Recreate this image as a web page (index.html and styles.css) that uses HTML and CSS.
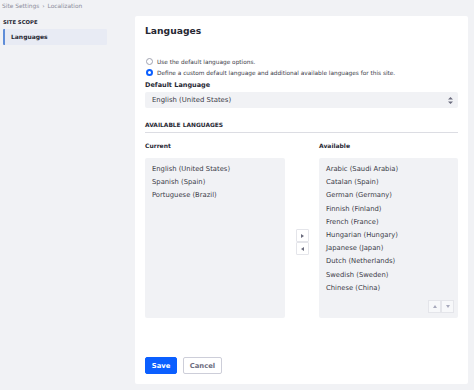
FILE: index.html
```html
<!doctype html>
<html lang="en">
<head>
    <meta charset="utf-8">
    <meta name="viewport" content="width=device-width, initial-scale=1">
    <title>Localization</title>
    <link rel="stylesheet" href="styles.css">
</head>
<body>

    <div class="breadcrumb">Site Settings <span class="sep">&rsaquo;</span> Localization</div>

    <div class="layout">
        <nav class="sidebar">
            <div class="side-title">SITE SCOPE</div>
            <a class="side-item active">Languages</a>
        </nav>

        <div class="card">
            <h1>Languages</h1>

            <form class="lang-form">
                <label class="radio">
                    <span class="radio-dot"></span>
                    Use the default language options.
                </label>
                <label class="radio">
                    <span class="radio-dot checked"></span>
                    Define a custom default language and additional available languages for this site.
                </label>

                <div class="form-label">Default Language</div>
                <div class="select">
                    <span>English (United States)</span>
                    <svg class="caret" width="5" height="7" viewBox="0 0 5 7">
                        <path d="M2.5 0 L5 2.6 H0 Z M2.5 7 L0 4.4 H5 Z" fill="#6b6c7e"/>
                    </svg>
                </div>

                <div class="section-title">AVAILABLE LANGUAGES</div>

                <div class="selector">
                    <div class="col">
                        <div class="col-label">Current</div>
                        <ul class="list-box">
                            <li>English (United States)</li>
                            <li>Spanish (Spain)</li>
                            <li>Portuguese (Brazil)</li>
                        </ul>
                    </div>

                    <div class="move">
                        <button type="button" class="move-btn">
                            <svg width="3" height="4" viewBox="0 0 3 4"><path d="M0 0 L3 2 L0 4 Z" fill="#6b6c7e"/></svg>
                        </button>
                        <button type="button" class="move-btn">
                            <svg width="3" height="4" viewBox="0 0 3 4"><path d="M3 0 L0 2 L3 4 Z" fill="#6b6c7e"/></svg>
                        </button>
                    </div>

                    <div class="col">
                        <div class="col-label">Available</div>
                        <div class="list-box avail">
                            <ul>
                                <li>Arabic (Saudi Arabia)</li>
                                <li>Catalan (Spain)</li>
                                <li>German (Germany)</li>
                                <li>Finnish (Finland)</li>
                                <li>French (France)</li>
                                <li>Hungarian (Hungary)</li>
                                <li>Japanese (Japan)</li>
                                <li>Dutch (Netherlands)</li>
                                <li>Swedish (Sweden)</li>
                                <li>Chinese (China)</li>
                            </ul>
                            <div class="order">
                                <button type="button" class="order-btn">
                                    <svg width="4" height="3" viewBox="0 0 4 3"><path d="M0 3 L2 0 L4 3 Z" fill="#a7a9bc"/></svg>
                                </button>
                                <button type="button" class="order-btn">
                                    <svg width="4" height="3" viewBox="0 0 4 3"><path d="M0 0 L4 0 L2 3 Z" fill="#a7a9bc"/></svg>
                                </button>
                            </div>
                        </div>
                    </div>
                </div>

                <div class="actions">
                    <button type="submit" class="btn btn-primary">Save</button>
                    <button type="button" class="btn btn-secondary">Cancel</button>
                </div>
            </form>
        </div>
    </div>

</body>
</html>
```

FILE: styles.css
```css
body {
    font-family: "DejaVu Sans", sans-serif;
    background: #f1f2f5;
    color: #272833;
    margin: 0;
    padding: 0;
    font-size: 5.8px;
}

.breadcrumb {
    height: 13px;
    line-height: 13px;
    padding-left: 2px;
    font-size: 5.9px;
    color: #8b8c9a;
}
.breadcrumb .sep {
    margin: 0 1px;
}

.layout {
    display: flex;
    align-items: flex-start;
}

.sidebar {
    width: 135px;
    padding-left: 3px;
    box-sizing: border-box;
}
.side-title {
    font-weight: bold;
    font-size: 5.3px;
    line-height: 10px;
    margin-top: 4px;
    color: #272833;
}
.side-item {
    display: block;
    width: 104px;
    height: 16px;
    line-height: 16px;
    margin-top: 2px;
    padding-left: 6px;
    box-sizing: border-box;
    background: #e8ebf4;
    border-left: 2px solid #5f8dd8;
    border-radius: 1px;
    font-weight: bold;
    font-size: 6px;
    color: #272833;
}

.card {
    width: 333px;
    height: 368px;
    margin-top: 3px;
    background: #fff;
    border-radius: 2px;
    padding: 0 10px;
    box-sizing: border-box;
}

h1 {
    font-size: 9.2px;
    line-height: 14px;
    margin: 8px 0 0;
    color: #272833;
}

.lang-form {
    margin-top: 18px;
}

.radio {
    display: flex;
    align-items: center;
    height: 11px;
    color: #3b3c48;
}
.radio-dot {
    width: 5px;
    height: 5px;
    border: 1px solid #a0a2b0;
    border-radius: 50%;
    margin: 0 4px 0 1px;
    background: #fff;
}
.radio-dot.checked {
    border: 2px solid #0b5fff;
    width: 3px;
    height: 3px;
}

.form-label {
    font-weight: bold;
    font-size: 6.5px;
    line-height: 12px;
    margin-top: 1px;
}

.select {
    display: flex;
    justify-content: space-between;
    align-items: center;
    height: 16px;
    margin-top: 1px;
    padding: 0 5px 0 7px;
    background: #f1f2f5;
    border-radius: 2px;
    font-size: 6.9px;
    color: #3b3c48;
}

.section-title {
    font-weight: bold;
    font-size: 5.9px;
    line-height: 10px;
    margin-top: 12px;
    padding-bottom: 2px;
    border-bottom: 1px solid #dcdde3;
}

.selector {
    display: grid;
    grid-template-columns: 140px 1fr 139px;
    margin-top: 9px;
}

.col-label {
    font-weight: bold;
    font-size: 6px;
    line-height: 8px;
    margin-bottom: 8px;
}

.list-box {
    height: 160px;
    margin: 0;
    padding: 5px 7px 3px;
    box-sizing: border-box;
    background: #f1f2f5;
    border-radius: 2px;
    list-style: none;
    color: #3b3c48;
    font-size: 6.8px;
}
.list-box li {
    line-height: 13.2px;
}
.list-box ul {
    margin: 0;
    padding: 0;
    list-style: none;
}

.avail {
    display: flex;
    flex-direction: column;
    justify-content: space-between;
    padding-bottom: 5px;
    padding-right: 4px;
}
.order {
    align-self: flex-end;
    display: flex;
}
.order-btn {
    width: 13px;
    height: 13px;
    padding: 0;
    border: 1px solid #e4e5ea;
    background: #f7f8fa;
    display: flex;
    align-items: center;
    justify-content: center;
}

.move {
    display: flex;
    flex-direction: column;
    align-items: center;
    padding-top: 87px;
}
.move-btn {
    width: 13px;
    height: 13px;
    padding: 0;
    border: 1px solid #e4e5ea;
    background: #fff;
    border-radius: 1px;
    display: flex;
    align-items: center;
    justify-content: center;
}

.actions {
    display: flex;
    gap: 6px;
    margin-top: 39px;
}
.btn {
    height: 17px;
    padding: 0;
    border-radius: 2px;
    font-family: "DejaVu Sans", sans-serif;
    font-size: 6.8px;
    font-weight: bold;
    cursor: pointer;
}
.btn-primary {
    width: 32px;
    background: #0b5fff;
    border: 1px solid #0b5fff;
    color: #fff;
}
.btn-secondary {
    width: 39px;
    background: #fff;
    border: 1px solid #cdced9;
    color: #6b6c7e;
}
```
